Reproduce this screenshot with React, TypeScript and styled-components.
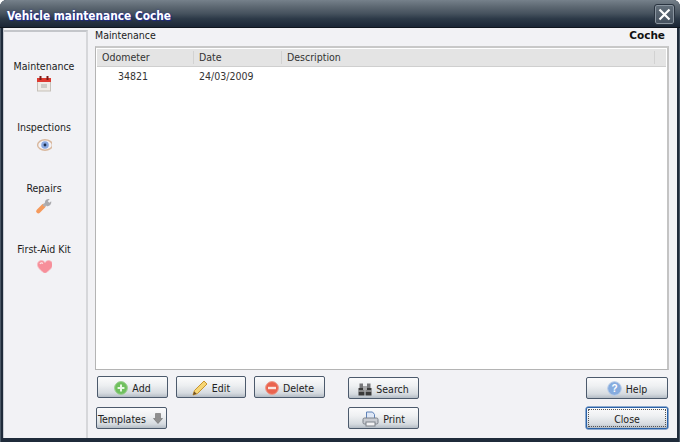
import React from "react";
import styled, { createGlobalStyle } from "styled-components";

const Global = createGlobalStyle`
  html, body { margin: 0; padding: 0; background: #ffffff; }
  body { font-family: "DejaVu Sans Condensed", "DejaVu Sans", sans-serif; font-stretch: condensed; font-size: 10.5px; color: #1c1c1c; }
`;

const Win = styled.div`
  width: 680px; height: 442px; box-sizing: border-box;
  display: flex; flex-direction: column;
  background: #1f2b3a;
  border-radius: 7px 7px 0 0;
  padding: 0 3px 4px 3px;
  box-shadow: inset 1px 0 0 #4b5866, inset -1px 0 0 #4b5866, inset 0 1px 0 #6b7783;
`;
const TitleBar = styled.div`
  height: 28px; margin: 0 -3px; padding: 0 6px 0 7px; box-sizing: border-box;
  display: flex; align-items: center; justify-content: space-between;
  background: linear-gradient(#76818b 0, #5d6872 25%, #46525e 50%, #2c3947 70%, #1b2636 100%);
  border-radius: 7px 7px 0 0;
  border-bottom: 1px solid #10161f;
`;
const Title = styled.span`
  font-weight: 700; font-size: 11.8px; color: #fff;
  text-shadow: 0 0 2px #2a38a0, 1px 1px 1px #1a2480;
  position: relative; top: 2px;
`;
const CloseBox = styled.div`
  width: 19px; height: 19px; box-sizing: border-box; margin-top: 2px;
  border: 1px solid #8a95a0; border-radius: 2px; outline: 1px solid #2a3440;
  background: linear-gradient(#626e79, #465260);
  display: flex; align-items: center; justify-content: center;
`;
const Body = styled.div`
  flex: 1; min-height: 0; display: flex; background: #f2f2f5;
  border-left: 1px solid #c9ccd2;
`;
const Side = styled.nav`
  width: 84px; flex: none; box-sizing: border-box;
  border-top: 2px solid #c4c6ca; border-right: 2px solid #d6d7da; margin-top: 2px;
  padding: 27px 2px 0 0;
  display: flex; flex-direction: column; align-items: center; gap: 27px;
`;
const SideItem = styled.div`
  height: 34px; display: flex; flex-direction: column; align-items: center; gap: 2px; line-height: 15px;
  & > svg { display: block; }
`;
const Main = styled.main`
  flex: 1; min-width: 0; box-sizing: border-box; padding: 0 8px 8px 7px;
  display: flex; flex-direction: column;
`;
const Head = styled.div`
  height: 18px; display: flex; justify-content: space-between; align-items: center; padding: 0 4px 4px 0; box-sizing: border-box;
`;
const Vehicle = styled.b`
  font-stretch: normal; font-family: "DejaVu Sans", sans-serif; font-size: 10.5px; color: #111;
`;
const ListBox = styled.div`
  height: 324px; box-sizing: border-box; background: #fff;
  border: 1px solid #b4b4b4; border-right: 2px solid #c4c4c4; border-top: 2px solid #c8c8c8;
  padding: 0 1px;
`;
const HeadRow = styled.div`
  height: 19px; box-sizing: border-box; display: grid; grid-template-columns: 97px 88px 373px 1fr;
  background: #e4e4e4; border-bottom: 1px solid #cfcfcf; align-items: center; border-top: 1px solid #fff;
`;
const HeadCell = styled.div`
  height: 13px; line-height: 12px; padding-left: 5px; border-right: 1px solid #d2d2d2; color: #333;
`;
const DataRow = styled.div`
  height: 18px; display: grid; grid-template-columns: 97px 88px 1fr; align-items: center;
`;
const Cell = styled.div<{ $num?: boolean }>`
  padding-left: ${(p) => (p.$num ? "21px" : "5px")}; color: #333;
`;
const Footer = styled.div`
  display: flex; margin-top: 6px; justify-content: space-between; padding: 0 1px 0 1px;
`;
const Left = styled.div`
  display: flex; gap: 23px;
`;
const Col = styled.div<{ $gap: number; $top?: number }>`
  display: flex; flex-direction: column; gap: ${(p) => p.$gap}px; margin-top: ${(p) => p.$top ?? 0}px;
`;
const Row = styled.div<{ $shift?: number }>`
  display: flex; gap: 8px; margin-left: ${(p) => p.$shift ?? 0}px;
`;
const Btn = styled.button<{ $w?: number; $focus?: boolean; $start?: boolean }>`
  width: ${(p) => p.$w ?? 71}px; height: 22px; box-sizing: border-box; padding: ${(p) => (p.$start ? "1px 3px 0 1px" : "1px 0 0")};
  font: inherit; color: #222;
  display: flex; align-items: center; justify-content: ${(p) => (p.$start ? "space-between" : "center")}; gap: 4px;
  border: 1px solid ${(p) => (p.$focus ? "#2a62a8" : "#4c5a6c")}; border-radius: 2px;
  background: linear-gradient(#fbfbfc 0, #eef0f2 40%, #d6dbe0 80%, #b4bcc5 100%);
  ${(p) => (p.$focus ? "outline: 1px dotted #555; outline-offset: -3px; box-shadow: 0 0 0 .5px #2a62a8;" : "")}
  & > svg { flex: none; display: block; }
`;

const Calendar = () => (
  <svg width="16" height="17" viewBox="0 1 16 17">
    <rect x="1.5" y="4" width="13" height="12" fill="#f0ece6" stroke="#c6c1b9" />
    <rect x="1" y="3" width="14" height="4" fill="#de3a30" />
    <rect x="3.5" y="1" width="2" height="4" fill="#7d1c18" />
    <rect x="10.5" y="1" width="2" height="4" fill="#7d1c18" />
    <rect x="5" y="9" width="6" height="4" fill="#cfccc6" />
  </svg>
);
const Eye = () => (
  <svg width="16" height="14" viewBox="-1 -1 16 14">
    <ellipse cx="8" cy="7" rx="7.4" ry="5.2" fill="#f3f2f6" stroke="#d9b89d" strokeWidth="1.4" />
    <circle cx="8" cy="7" r="3.8" fill="#8aa9e2" />
    <circle cx="8" cy="7" r="1.4" fill="#1d3050" />
  </svg>
);
const Wrench = () => (
  <svg width="18" height="18" viewBox="0 1 18 18">
    <path d="M3 15 L8.5 9.5" stroke="#f59a5c" strokeWidth="4.6" strokeLinecap="round" />
    <path d="M8.5 9.5 L12 6" stroke="#b0b0b4" strokeWidth="3" />
    <path d="M10 6 a4 4 0 0 1 4-4 l1 0 -2 2.4 1.6 1.6 2-1.6 a4 4 0 0 1-5 5z" fill="#aaaaae" />
  </svg>
);
const Heart = () => (
  <svg width="16" height="14" viewBox="-1 -1 16 14">
    <path d="M8 13.5 C3 10 .5 7.6 .5 4.6 C.5 2 2.5.6 4.4.6 C6 .6 7.2 1.4 8 2.8 C8.8 1.4 10 .6 11.6.6 C13.5.6 15.5 2 15.5 4.6 C15.5 7.6 13 10 8 13.5z" fill="#f78f9a" stroke="#f5b6bc" strokeWidth=".8" />
    <path d="M3 4 C3.6 2.8 5 2.6 6 3.4" stroke="#fde4e6" strokeWidth="1.3" fill="none" />
  </svg>
);
const Plus = () => (
  <svg width="14" height="14" viewBox="0 0 14 14">
    <circle cx="7" cy="7" r="6.4" fill="#6fc05e" stroke="#9ccf92" />
    <path d="M7 3.6v6.8M3.6 7h6.8" stroke="#eaf7e6" strokeWidth="2" />
  </svg>
);
const Pencil = () => (
  <svg width="16" height="17" viewBox="0 0 16 17">
    <path d="M2.4 11.6 L12 2 L15 5 L5.4 14.6 L1 16z" fill="#f6d675" stroke="#c8942f" />
    <path d="M1 16 L2.2 12.4 L4.6 14.8z" fill="#6e5028" />
  </svg>
);
const Minus = () => (
  <svg width="14" height="14" viewBox="0 0 14 14">
    <circle cx="7" cy="7" r="6.4" fill="#ea644f" stroke="#ec9b8b" />
    <rect x="3" y="5.8" width="8" height="2.4" fill="#fbe6e0" />
  </svg>
);
const ArrowDown = () => (
  <svg width="10" height="11" viewBox="0 0 10 11">
    <path d="M2.5 0.5h5v5h2L5 10.5 .5 5.5h2z" fill="#8f8f8f" stroke="#6f6f6f" strokeWidth=".6" />
  </svg>
);
const Binoculars = () => (
  <svg width="14" height="14" viewBox="0 0 14 14">
    <rect x="0.5" y="6" width="6" height="7.5" fill="#3a3a3a" />
    <rect x="7.5" y="6" width="6" height="7.5" fill="#3a3a3a" />
    <rect x="1.5" y="1.5" width="3.5" height="4.5" fill="#77777a" />
    <rect x="9" y="1.5" width="3.5" height="4.5" fill="#77777a" />
    <rect x="5" y="4" width="4" height="4" fill="#a8a8aa" />
    <rect x="0.5" y="8.5" width="6" height="1" fill="#d4d4d6" />
    <rect x="7.5" y="8.5" width="6" height="1" fill="#d4d4d6" />
  </svg>
);
const Printer = () => (
  <svg width="17" height="16" viewBox="0 0 17 16">
    <path d="M4.5 1h6l2 2.4V8h-8z" fill="#dfe8f6" stroke="#5f82b8" />
    <rect x="1" y="7" width="15" height="6" rx="1.5" fill="#c9ccd2" stroke="#7d828a" />
    <rect x="4" y="11" width="9" height="4" fill="#f2f2f4" stroke="#7d828a" />
  </svg>
);
const HelpIcon = () => (
  <svg width="15" height="15" viewBox="0 0 15 15">
    <circle cx="7.5" cy="7.5" r="6.8" fill="#86acdf" stroke="#b6cbe8" />
    <text x="7.5" y="11" textAnchor="middle" fontSize="10" fontWeight="700" fill="#fff" fontFamily="Liberation Sans, sans-serif">?</text>
  </svg>
);

export default function App() {
  return (
    <>
      <Global />
      <Win>
        <TitleBar>
          <Title>Vehicle maintenance Coche</Title>
          <CloseBox>
            <svg width="13" height="13" viewBox="0 0 13 13">
              <path d="M1.5 1.5l10 10M11.5 1.5l-10 10" stroke="#fff" strokeWidth="2.2" />
            </svg>
          </CloseBox>
        </TitleBar>
        <Body>
          <Side>
            <SideItem>Maintenance<Calendar /></SideItem>
            <SideItem>Inspections<Eye /></SideItem>
            <SideItem>Repairs<Wrench /></SideItem>
            <SideItem>First-Aid Kit<Heart /></SideItem>
          </Side>
          <Main>
            <Head>
              <span>Maintenance</span>
              <Vehicle>Coche</Vehicle>
            </Head>
            <ListBox>
              <HeadRow>
                <HeadCell>Odometer</HeadCell>
                <HeadCell>Date</HeadCell>
                <HeadCell>Description</HeadCell>
                <span />
              </HeadRow>
              <DataRow>
                <Cell $num>34821</Cell>
                <Cell>24/03/2009</Cell>
                <span />
              </DataRow>
            </ListBox>
            <Footer>
              <Left>
                <Col $gap={9}>
                  <Row $shift={1}>
                    <Btn><Plus />Add</Btn>
                    <Btn $w={70}><Pencil />Edit</Btn>
                    <Btn><Minus />Delete</Btn>
                  </Row>
                  <Row>
                    <Btn $start>Templates <ArrowDown /></Btn>
                  </Row>
                </Col>
                <Col $gap={8} $top={1}>
                  <Row><Btn><Binoculars />Search</Btn></Row>
                  <Row><Btn><Printer />Print</Btn></Row>
                </Col>
              </Left>
              <Col $gap={8} $top={1}>
                <Row><Btn $w={82}><HelpIcon />Help</Btn></Row>
                <Row><Btn $w={82} $focus>Close</Btn></Row>
              </Col>
            </Footer>
          </Main>
        </Body>
      </Win>
    </>
  );
}
